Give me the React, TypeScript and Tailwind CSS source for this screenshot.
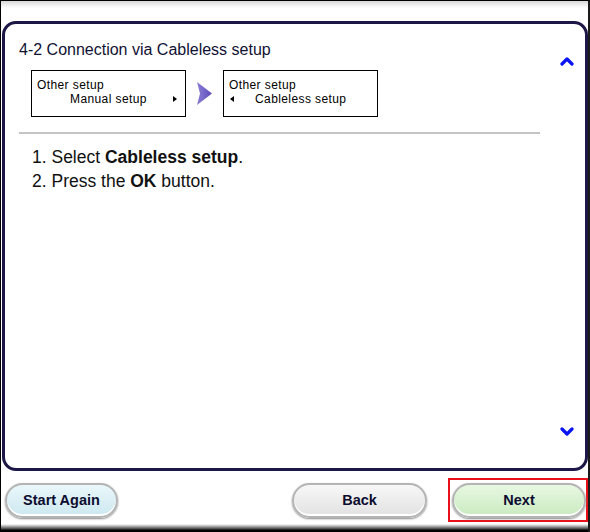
const sans = { fontFamily: '"Liberation Sans", Arial, sans-serif' };

function Chevron({ up }: { up?: boolean }) {
  return (
    <svg width="14" height="10" viewBox="0 0 14 10" className="block">
      <polyline
        points={up ? '2,8 7,3 12,8' : '2,2 7,7 12,2'}
        fill="none"
        stroke="#0a14f0"
        strokeWidth="3.2"
        strokeLinecap="round"
        strokeLinejoin="round"
      />
    </svg>
  );
}

function Pill({ label, tone }: { label: string; tone: 'blue' | 'gray' | 'green' }) {
  const bg =
    tone === 'blue'
      ? 'bg-[linear-gradient(#eaf7fb,#cde8f0)]'
      : tone === 'green'
        ? 'bg-[linear-gradient(#e8f8e2,#c9eac0)]'
        : 'bg-[linear-gradient(#f7f7f7,#e2e2e2)]';
  const width = tone === 'blue' ? 'w-[113px]' : tone === 'green' ? 'w-[134px]' : 'w-[135px]';
  return (
    <button
      className={`${width} h-[35px] ${bg} rounded-full border-2 border-[#b4b4b4] shadow-[inset_0_-2px_0_#ffffff,0_1px_2px_#8a8a8a] pt-[2px] text-[14.5px] font-bold text-[#0c0c30] flex items-center justify-center`}
    >
      {label}
    </button>
  );
}

export default function App() {
  return (
    <div
      className="w-[590px] h-[532px] bg-white flex flex-col border-t border-l border-black border-r-2 border-r-[#1a1a1a]"
      style={sans}
    >
      {/* top strip */}
      <div className="h-[7px] bg-[linear-gradient(#d8d8d8,#ffffff)]" />

      {/* main panel */}
      <div className="mt-[13px] ml-[1px] h-[450px] border-[3px] border-[#1d1747] rounded-[14px] flex">
        <div className="flex-1 pl-[14px] pt-[17px]">
          <h1 className="text-[16px] leading-[18px] text-[#111133]">4-2 Connection via Cableless setup</h1>

          {/* panel breadcrumb */}
          <div className="mt-[11px] ml-[12px] flex items-center">
            <div className="w-[155px] h-[47px] border border-black pt-[7px] pl-[5px] pr-[5px] text-[12px] leading-[14px] tracking-[0.4px] text-black">
              <div>Other setup</div>
              <div className="flex items-center">
                <span className="ml-[33px]">Manual setup</span>
                <svg width="4" height="6" viewBox="0 0 4 6" className="ml-auto mr-[3px]">
                  <polygon points="0,0 4,3 0,6" fill="#000" />
                </svg>
              </div>
            </div>
            <svg width="15" height="23" viewBox="0 0 15 23" className="ml-[11px]">
              <defs>
                <linearGradient id="ar" x1="0" y1="0" x2="1" y2="0">
                  <stop offset="0" stopColor="#8a7ed6" />
                  <stop offset="1" stopColor="#5b4cb8" />
                </linearGradient>
              </defs>
              <polygon points="0,0 15,11.5 0,23 3,11.5" fill="url(#ar)" />
            </svg>
            <div className="ml-[11px] w-[155px] h-[47px] border border-black pt-[7px] pl-[5px] pr-[5px] text-[12px] leading-[14px] tracking-[0.4px] text-black">
              <div>Other setup</div>
              <div className="flex items-center">
                <svg width="4" height="6" viewBox="0 0 4 6" className="ml-[1px]">
                  <polygon points="4,0 0,3 4,6" fill="#000" />
                </svg>
                <span className="ml-[21px]">Cableless setup</span>
              </div>
            </div>
          </div>

          <div className="mt-[15px] w-[521px] h-[2px] bg-[#c4c4c4]" />

          <ol className="mt-[11px] ml-[13px] text-[17.5px] leading-[24px] text-[#111111]">
            <li>
              1. Select <b>Cableless setup</b>.
            </li>
            <li>
              2. Press the <b>OK</b> button.
            </li>
          </ol>
        </div>

        {/* scroll indicators */}
        <div className="w-[36px] flex flex-col items-center justify-between pt-[32px] pb-[31px]">
          <Chevron up />
          <Chevron />
        </div>
      </div>

      {/* buttons */}
      <div className="mt-[7px] h-[44px] flex items-center">
        <div className="ml-[4px]">
          <Pill label="Start Again" tone="blue" />
        </div>
        <div className="ml-auto">
          <Pill label="Back" tone="gray" />
        </div>
        <div className="ml-[21px] w-[140px] h-[44px] border-2 border-[#e8101a] flex items-center pl-[2px]">
          <Pill label="Next" tone="green" />
        </div>
      </div>

      {/* bottom edge */}
      <div className="mt-auto h-[8px] bg-[linear-gradient(#ffffff,#b8b8b8_25%,#5a5a5a_55%,#000000_80%)]" />
    </div>
  );
}
